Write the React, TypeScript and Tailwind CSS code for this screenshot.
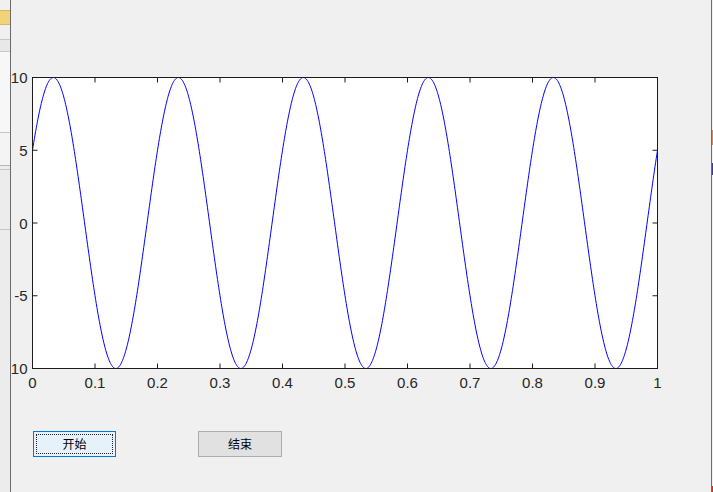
import React from 'react';

const X0 = 32.5;
const X1 = 657.5;
const Y0 = 77.5;
const Y1 = 368.5;

const px = (t: number) => X0 + (X1 - X0) * t;
const py = (v: number) => Y0 + ((10 - v) / 20) * (Y1 - Y0);

function wavePath() {
  const pts: string[] = [];
  const n = 1000;
  for (let i = 0; i <= n; i++) {
    const t = i / n;
    const v = 10 * Math.sin(2 * Math.PI * 5 * t + Math.PI / 6);
    pts.push(`${i === 0 ? 'M' : 'L'}${px(t).toFixed(2)},${py(v).toFixed(2)}`);
  }
  return pts.join(' ');
}

const xTicks = [0, 0.1, 0.2, 0.3, 0.4, 0.5, 0.6, 0.7, 0.8, 0.9, 1];
const yTicks = [10, 5, 0, -5, -10];

function Plot() {
  return (
    <svg width={700} height={330} className="block mt-[64px]">
      <g transform="translate(-11,-64)">
        <rect x={X0} y={Y0} width={X1 - X0} height={Y1 - Y0} fill="#ffffff" />
        <path d={wavePath()} fill="none" stroke="#0000ff" strokeWidth={1} />
        <rect x={X0} y={Y0} width={X1 - X0} height={Y1 - Y0} fill="none" stroke="#1c1c1c" strokeWidth={1} />
        {/* x ticks */}
        {xTicks.map((t) => (
          <g key={t}>
            <line x1={px(t)} x2={px(t)} y1={Y1} y2={Y1 - 5} stroke="#1c1c1c" />
            <line x1={px(t)} x2={px(t)} y1={Y0} y2={Y0 + 5} stroke="#1c1c1c" />
            <text
              x={px(t)}
              y={388}
              textAnchor="middle"
              fontSize={15}
              fill="#262626"
              style={{ fontFamily: '"Liberation Sans", Arial, sans-serif' }}
            >
              {t}
            </text>
          </g>
        ))}
        {/* y ticks */}
        {yTicks.map((v) => (
          <g key={v}>
            <line x1={X0} x2={X0 + 5} y1={py(v)} y2={py(v)} stroke="#1c1c1c" />
            <line x1={X1} x2={X1 - 5} y1={py(v)} y2={py(v)} stroke="#1c1c1c" />
            <text
              x={27.5}
              y={py(v) + 5.5}
              textAnchor="end"
              fontSize={15}
              fill="#262626"
              style={{ fontFamily: '"Liberation Sans", Arial, sans-serif' }}
            >
              {v}
            </text>
          </g>
        ))}
      </g>
    </svg>
  );
}

export default function App() {
  return (
    <div className="w-[713px] h-[492px] bg-[#f0f0f0] flex overflow-hidden">
      {/* window behind, left edge */}
      <div className="w-[10px] flex flex-col bg-[#ececec]">
        <div className="h-[10px] bg-[#f0f0f0]" />
        <div className="h-[15px] bg-[#f3d37a] border-y border-[#d9b85c]" />
        <div className="h-[15px] bg-[#f0f0f0] border-b border-[#c6c6c6]" />
        <div className="h-[12px] bg-[#e8e8e8] border-b border-[#c6c6c6]" />
        <div className="h-[81px] bg-[#f7f7f7] border-b border-[#c6c6c6]" />
        <div className="h-[33px] bg-[#f4f4f4] border-b border-[#b8b8b8]" />
        <div className="h-[4px] bg-[#ececec] border-b border-[#c6c6c6]" />
        <div className="h-[60px] bg-[#ececec] border-b border-[#c6c6c6]" />
        <div className="flex-1 bg-[#ececec]" />
      </div>
      <div className="w-px bg-[#6a6a6a]" />

      {/* figure area */}
      <div className="w-[700px] flex flex-col overflow-hidden">
        <Plot />
        <div className="flex mt-[37px] pl-[22px] gap-[82px]">
          <button className="w-[83px] h-[26px] border border-[#0078d7] bg-[#e5f1fb] p-[2px]">
            <div
              className="w-full h-full border border-dotted border-[#222] flex items-center justify-center text-[12px] text-black leading-none"
              style={{ fontFamily: '"Noto Sans CJK SC", "Liberation Sans", sans-serif' }}
            >
              开始
            </div>
          </button>
          <button
            className="w-[84px] h-[26px] border border-[#adadad] bg-[#e1e1e1] flex items-center justify-center text-[12px] text-black leading-none"
            style={{ fontFamily: '"Noto Sans CJK SC", "Liberation Sans", sans-serif' }}
          >
            结束
          </button>
        </div>
      </div>

      <div className="w-px bg-[#6e6e6e]" />
      <div className="w-px flex flex-col bg-[#f0f0f0]">
        <div className="h-[130px]" />
        <div className="h-[15px] bg-[#d08a5c]" />
        <div className="h-[18px]" />
        <div className="h-[12px] bg-[#3c3c8c]" />
        <div className="flex-1" />
        <div className="h-[6px] bg-[#d03020]" />
      </div>
    </div>
  );
}
